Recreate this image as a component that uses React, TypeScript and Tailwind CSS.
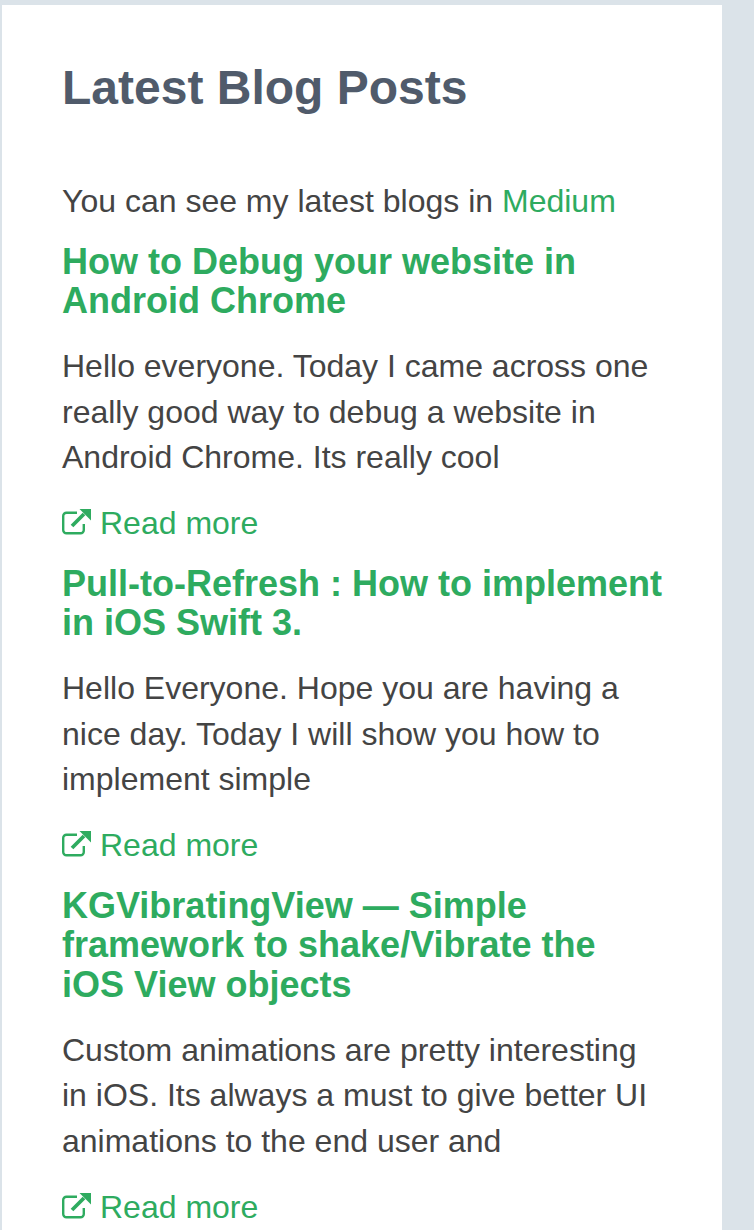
import React from 'react';

const posts = [
  {
    title: ['How to Debug your website in', 'Android Chrome'],
    body: ['Hello everyone. Today I came across one', 'really good way to debug a website in', 'Android Chrome. Its really cool'],
  },
  {
    title: ['Pull-to-Refresh : How to implement', 'in iOS Swift 3.'],
    body: ['Hello Everyone. Hope you are having a', 'nice day. Today I will show you how to', 'implement simple'],
  },
  {
    title: ['KGVibratingView — Simple', 'framework to shake/Vibrate the', 'iOS View objects'],
    body: ['Custom animations are pretty interesting', 'in iOS. Its always a must to give better UI', 'animations to the end user and'],
  },
];

const ExternalIcon = () => (
  <svg width="29" height="26" viewBox="0 0 29 26" fill="none" className="shrink-0 -translate-y-px">
    <path d="M21.800 15v6a3.300 3.300 0 0 1-3.300 3.300H4.500A3.300 3.300 0 0 1 1.200 21V7a3.300 3.300 0 0 1 3.300-3.300H15" stroke="#2eab5f" strokeWidth="2.400" />
    <path d="M10 17L22 5" stroke="#2eab5f" strokeWidth="3.800" />
    <path d="M17.500 0H29v11.500z" fill="#2eab5f" />
  </svg>
);

export default function App() {
  return (
    <div className="h-[1230px] overflow-hidden bg-[#dbe3e9] pt-[5px] pl-[2px] font-['Liberation_Sans',sans-serif]">
      <div className="w-[720px] h-[1300px] bg-white pl-[60px] pr-[40px] pb-10">
        <h1 className="pt-[56px] text-[48px] leading-[54px] font-bold text-[#505b6b]">Latest Blog Posts</h1>
        <p className="mt-[63px] text-[32px] leading-[46px] text-[#444444]">
          You can see my latest blogs in <span className="text-[#2eab5f]">Medium</span>
        </p>
        {posts.map((post) => (
          <div key={post.title[0]}>
            <h2 className="mt-[17.750px] text-[36px] leading-[39.500px] font-bold text-[#2eab5f]">
              {post.title.map((line) => (
                <div key={line}>{line}</div>
              ))}
            </h2>
            <div className="mt-[23.250px] text-[32px] leading-[45.500px] text-[#444444]">
              {post.body.map((line) => (
                <div key={line}>{line}</div>
              ))}
            </div>
            <a className="mt-[19.500px] flex items-center gap-[9px] text-[32px] leading-[46px] text-[#2eab5f]">
              <ExternalIcon />
              Read more
            </a>
          </div>
        ))}
      </div>
    </div>
  );
}
